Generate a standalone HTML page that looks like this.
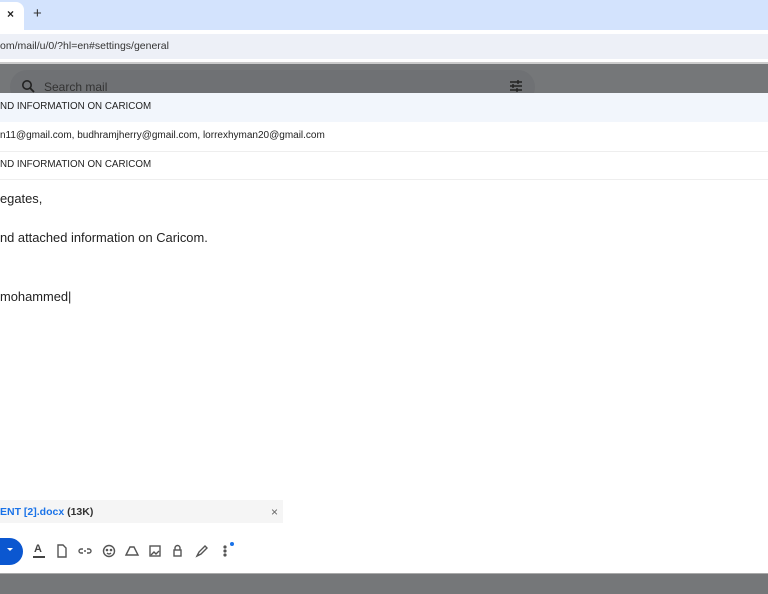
<!DOCTYPE html><html><head><style>
*{margin:0;padding:0;box-sizing:border-box}
body{width:768px;height:594px;overflow:hidden;font-family:"Liberation Sans",Arial,sans-serif;background:#fff;position:relative}
.a{position:absolute}
</style></head><body>
<div class="a" style="left:0;top:0;width:768px;height:30px;background:#d3e3fd"></div>
<div class="a" style="left:0;top:2px;width:24px;height:30px;background:#fff;border-radius:0 8px 0 0"></div>
<div class="a" style="left:7px;top:7px;font-size:12px;font-weight:bold;color:#222">×</div>
<div class="a" style="left:33px;top:5px;font-size:15px;color:#333">+</div>
<div class="a" style="left:0;top:30px;width:768px;height:34px;background:#fff"></div>
<div class="a" style="left:0;top:34px;width:768px;height:25px;background:#edf0f7"></div>
<div class="a" style="left:0;top:40px;font-size:10.5px;color:#333">om/mail/u/0/?hl=en#settings/general</div>
<div class="a" style="left:0;top:62px;width:768px;height:2px;background:#ccc"></div>
<div class="a" style="left:0;top:64px;width:768px;height:30px;background:#757779"></div>
<div class="a" style="left:10px;top:70px;width:525px;height:34px;background:#6f7174;border-radius:17px"></div>
<svg class="a" style="left:21px;top:79px" width="14" height="14" viewBox="0 0 14 14"><circle cx="6" cy="6" r="4.2" fill="none" stroke="#222" stroke-width="1.6"/><path d="M9 9l4 4" stroke="#222" stroke-width="1.8"/></svg>
<div class="a" style="left:44px;top:80px;font-size:12px;color:#333">Search mail</div>
<svg class="a" style="left:509px;top:79px" width="14" height="14" viewBox="0 0 14 14" stroke="#222" stroke-width="1.4"><path d="M1 3h12M1 7h12M1 11h12M9 1v4M4 5v4M8 9v4"/></svg>
<div class="a" style="left:0;top:93px;width:768px;height:29px;background:#f2f6fc"></div>
<div class="a" style="left:0;top:101px;font-size:9.8px;color:#1f1f1f">ND INFORMATION ON CARICOM</div>
<div class="a" style="left:0;top:130px;font-size:10px;color:#222">n11@gmail.com, budhramjherry@gmail.com, lorrexhyman20@gmail.com</div>
<div class="a" style="left:0;top:151px;width:768px;height:1px;background:#eee"></div>
<div class="a" style="left:0;top:159px;font-size:9.8px;color:#222">ND INFORMATION ON CARICOM</div>
<div class="a" style="left:0;top:179px;width:768px;height:1px;background:#eee"></div>
<div class="a" style="left:0;top:189px;font-size:12.9px;color:#222;line-height:19.5px">egates,<br><br>nd attached information on Caricom.<br><br><br>mohammed|</div>
<div class="a" style="left:0;top:500px;width:283px;height:23px;background:#f5f5f5"></div>
<div class="a" style="left:0;top:506px;font-size:10.5px;font-weight:bold;color:#1a73e8">ENT [2].docx <span style="color:#333">(13K)</span></div>
<div class="a" style="left:271px;top:505px;font-size:12px;color:#666">×</div>
<div class="a" style="left:-20px;top:538px;width:43px;height:27px;background:#0b57d0;border-radius:14px"></div>
<div class="a" style="left:7px;top:548px;width:0;height:0;border-left:3px solid transparent;border-right:3px solid transparent;border-top:3px solid #fff"></div>
<div class="a" style="left:34px;top:543px;font-size:11px;color:#444;font-weight:bold">A</div>
<div class="a" style="left:33px;top:556px;width:12px;height:2px;background:#444"></div>
<svg class="a" style="left:55px;top:543px" width="200" height="16" viewBox="0 0 200 16" fill="none" stroke="#555" stroke-width="1.4">
<path d="M3 2h5l3 3v9H3z"/>
<path d="M28 6h-2a2 2 0 000 4h2M32 6h2a2 2 0 010 4h-2M29 8h2"/>
<circle cx="54" cy="8" r="5.5"/><circle cx="52" cy="7" r=".6" fill="#555"/><circle cx="56" cy="7" r=".6" fill="#555"/><path d="M52 10q2 2 4 0"/>
<path d="M71 12l4-8h4l4 8z"/>
<rect x="95" y="3" width="10" height="10"/><path d="M96 12l3-3 2 2 3-3"/>
<rect x="119" y="7" width="7" height="6"/><path d="M120 7V5a2.5 2.5 0 015 0v2"/>
<path d="M142 13l2-4 6-6 2 2-6 6z"/>
<circle cx="170" cy="4" r=".9" fill="#555"/><circle cx="170" cy="8" r=".9" fill="#555"/><circle cx="170" cy="12" r=".9" fill="#555"/>
</svg>
<div class="a" style="left:230px;top:542px;width:4px;height:4px;border-radius:2px;background:#1a73e8"></div>
<div class="a" style="left:0;top:574px;width:768px;height:20px;background:#757779"></div>
<div class="a" style="left:0;top:573px;width:768px;height:1px;background:#aaa"></div>
</body></html>
